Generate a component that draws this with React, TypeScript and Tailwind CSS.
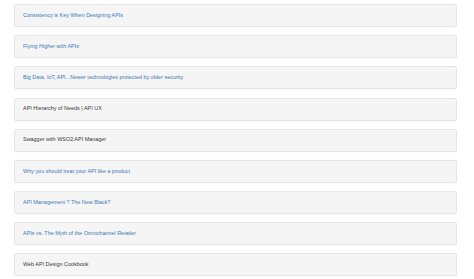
import React from "react";

const items: { t: string; link: boolean }[] = [
  { t: "Consistency is Key When Designing APIs", link: true },
  { t: "Flying Higher with APIs", link: true },
  { t: "Big Data, IoT, API...Newer technologies protected by older security", link: true },
  { t: "API Hierarchy of Needs | API UX", link: false },
  { t: "Swagger with WSO2 API Manager", link: false },
  { t: "Why you should treat your API like a product", link: true },
  { t: "API Management ? The New Black?", link: true },
  { t: "APIs vs. The Myth of the Omnichannel Retailer", link: true },
  { t: "Web API Design Cookbook", link: false },
];

export default function App() {
  return (
    <div
      className="w-[474px] h-[279px] bg-white overflow-hidden flex flex-col gap-[8.1px] pt-[4.3px] pl-[14px] pr-[17.5px]"
      style={{ fontFamily: '"Liberation Sans", Arial, sans-serif' }}
    >
      {items.map((it) => (
        <div
          key={it.t}
          className="h-[23px] shrink-0 flex items-center px-[8px] bg-[#f5f5f5] border border-[#e6e6e6] rounded-[2px] shadow-[0_0.5px_0.5px_rgba(0,0,0,0.03)]"
        >
          <span
            className={
              "text-[5.45px] leading-none whitespace-nowrap " +
              (it.link ? "text-[#3b7ab5]" : "text-[#383838]")
            }
          >
            {it.t}
          </span>
        </div>
      ))}
    </div>
  );
}
